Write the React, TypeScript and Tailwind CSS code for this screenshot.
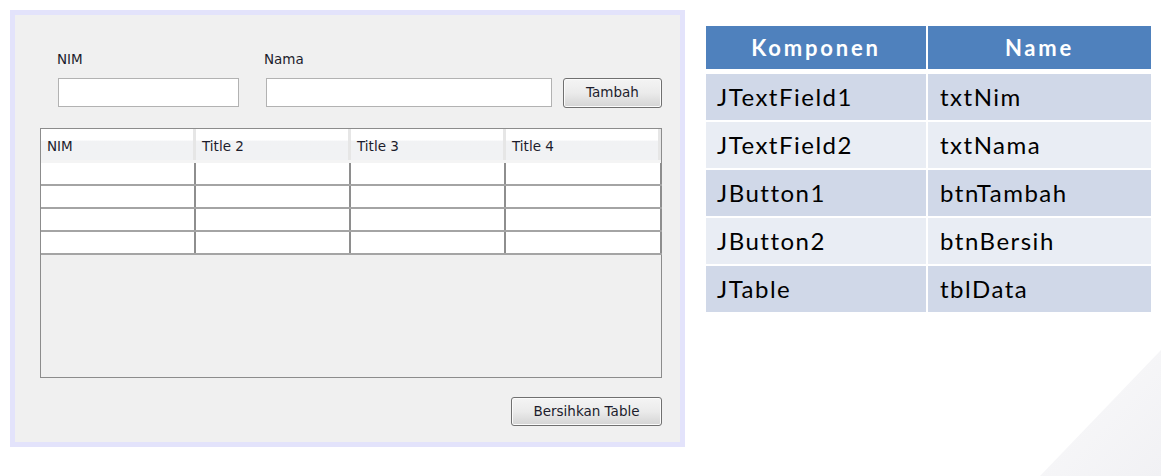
import React from 'react';

const components = [
  { komponen: 'JTextField1', name: 'txtNim' },
  { komponen: 'JTextField2', name: 'txtNama' },
  { komponen: 'JButton1', name: 'btnTambah' },
  { komponen: 'JButton2', name: 'btnBersih' },
  { komponen: 'JTable', name: 'tblData' },
];

const columns = ['NIM', 'Title 2', 'Title 3', 'Title 4'];

const SwingButton: React.FC<{ label: string; className?: string }> = ({ label, className = '' }) => (
  <button
    className={`rounded-[3px] border border-[#707070] bg-linear-to-b from-[#f4f4f4] via-[#ebebeb] to-[#d4d4d4] shadow-[inset_0_0_0_1px_#fbfbfb] text-[13.5px] leading-none text-[#1c1c2c] ${className}`}
  >
    {label}
  </button>
);

const FormPreview: React.FC = () => (
  <div className="w-[675px] h-[437px] shrink-0 border-[5px] border-[#e3e3fb] bg-[#f0f0f0] font-['DejaVu_Sans',sans-serif] text-[#1c1c2c]">
    <div className="flex flex-col pt-[37px] pl-[25px] pr-[18px]">
      {/* Input row */}
      <div className="flex items-start pl-[18px]">
        <div className="flex flex-col w-[181px]">
          <span className="text-[13.5px] leading-[14px] h-[14px] -ml-[1px] mb-[12px]">NIM</span>
          <div className="h-[29px] bg-white border border-[#b2b2b2]" />
        </div>
        <div className="flex flex-col w-[286px] ml-[27px]">
          <span className="text-[13.5px] leading-[14px] h-[14px] -ml-[2px] mb-[12px]">Nama</span>
          <div className="h-[29px] bg-white border border-[#b2b2b2]" />
        </div>
        <SwingButton label="Tambah" className="ml-[11px] mt-[26px] w-[99px] h-[30px]" />
      </div>

      {/* JTable */}
      <div className="mt-[20px] h-[250px] border border-[#8c8c8c] bg-[#f0f0f0] flex flex-col">
        <div className="flex h-[34px] border-b-[3px] border-[#f4f4f4] bg-linear-to-b from-white from-[35%] to-[#f1f2f4] to-[40%]">
          {columns.map((c, i) => (
            <div
              key={i}
              className="w-[155px] shrink-0 border-r-[3px] border-[#e6e6e6] flex items-center pl-[6px] pt-[3px] text-[13.5px]"
            >
              {c}
            </div>
          ))}
        </div>
        {[0, 1, 2, 3].map((r) => (
          <div key={r} className="flex h-[23px] border-b-2 border-[#a4a4a4] bg-white w-[621px]">
            {columns.map((_, i) => (
              <div key={i} className={`shrink-0 border-r-2 border-[#8e8e8e] ${i === 3 ? 'w-[156px]' : 'w-[155px]'}`} />
            ))}
          </div>
        ))}
      </div>

      <div className="flex justify-end mt-[19px]">
        <SwingButton label="Bersihkan Table" className="w-[151px] h-[29px]" />
      </div>
    </div>
  </div>
);

const ComponentTable: React.FC = () => (
  <div className="ml-[21px] mt-[16px] w-[445px] font-['Lato','Open_Sans',sans-serif]">
    <div className="flex h-[43px] bg-[#4f81bd] text-white font-bold text-[22px] tracking-[2.8px]">
      <div className="w-[222px] flex items-center justify-center border-r-2 border-white">Komponen</div>
      <div className="flex-1 flex items-center justify-center">Name</div>
    </div>
    <div className="mt-[5px] flex flex-col gap-[2px]">
      {components.map((row, i) => (
        <div
          key={row.komponen}
          className={`flex h-[46px] text-[24px] tracking-[1.5px] text-black ${i % 2 === 0 ? 'bg-[#d0d8e8]' : 'bg-[#e9edf4]'}`}
        >
          <div className="w-[222px] flex items-center pl-[11px] border-r-2 border-white">{row.komponen}</div>
          <div className="flex-1 flex items-center pl-[12px]">{row.name}</div>
        </div>
      ))}
    </div>
  </div>
);

export default function App() {
  return (
    <div className="relative w-[1161px] h-[476px] bg-white overflow-hidden flex items-start pl-[10px] pt-[10px]">
      {/* faint slide decoration in the corner */}
      <svg className="absolute right-0 bottom-0" width="130" height="130" viewBox="0 0 130 130">
        <defs>
          <linearGradient id="corner" x1="0" y1="0" x2="1" y2="1">
            <stop offset="0" stopColor="#fafafb" />
            <stop offset="1" stopColor="#f1f1f4" />
          </linearGradient>
        </defs>
        <polygon points="9,130 130,4 130,130" fill="url(#corner)" />
      </svg>
      <FormPreview />
      <ComponentTable />
    </div>
  );
}
